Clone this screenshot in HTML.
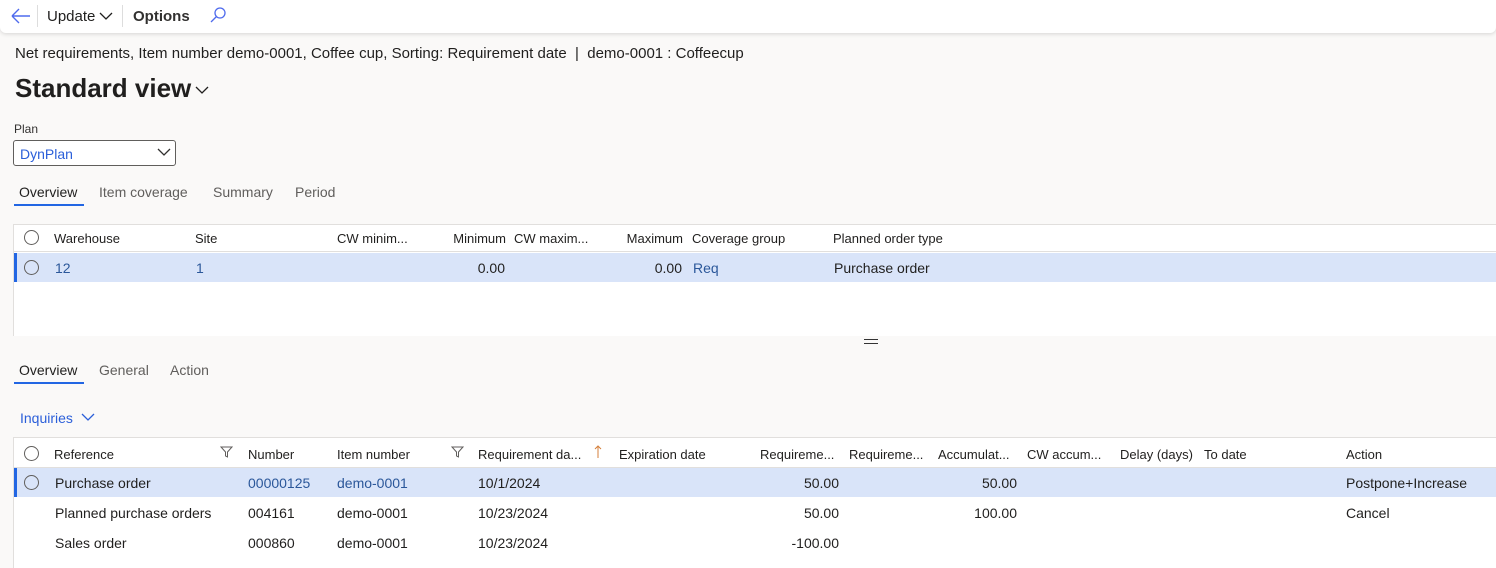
<!DOCTYPE html>
<html><head><meta charset="utf-8"><style>
*{margin:0;padding:0;box-sizing:border-box}
body{width:1496px;height:568px;overflow:hidden;background:#faf9f8;font-family:"Liberation Sans",sans-serif;color:#201f1e;position:relative}
.a{position:absolute;white-space:nowrap}
.g{font-family:"Liberation Sans Narrow","Liberation Sans",sans-serif;font-size:14px}
.h{font-size:13px;font-family:"Liberation Sans Narrow","Liberation Sans",sans-serif;color:#201f1e}
.r{text-align:right}
.lnk{color:#2b579a}
.rad{position:absolute;width:15px;height:15px;border:1px solid #605e5c;border-radius:50%}
</style></head><body>
<div class="a" style="left:0;top:0;width:1496px;height:33px;background:#fff;box-shadow:0 1px 4px rgba(0,0,0,.15);border-radius:0 0 6px 6px"></div>
<svg class="a" style="left:10px;top:7px" width="22" height="18"><path d="M2 9H20M2 9L9 2M2 9L9 16" stroke="#4f6bed" stroke-width="1.4" fill="none"/></svg>
<div class="a" style="left:37px;top:5px;width:1px;height:22px;background:#ddd"></div>
<div class="a" style="left:47px;top:8px;font-size:15px">Update</div>
<svg class="a" style="left:99px;top:11px" width="14" height="10"><path d="M1 2L7 8L13 2" stroke="#201f1e" stroke-width="1.3" fill="none"/></svg>
<div class="a" style="left:122px;top:5px;width:1px;height:22px;background:#ddd"></div>
<div class="a" style="left:133px;top:8px;font-size:15px;font-weight:bold;color:#323130">Options</div>
<svg class="a" style="left:208px;top:6px" width="20" height="18"><circle cx="12" cy="7" r="5" stroke="#4f6bed" stroke-width="1.3" fill="none"/><path d="M8.5 10.5L3 16" stroke="#4f6bed" stroke-width="1.3"/></svg>
<div class="a" style="left:15px;top:45px;font-size:15px">Net requirements, Item number demo-0001, Coffee cup, Sorting: Requirement date &nbsp;| &nbsp;demo-0001 : Coffeecup</div>
<div class="a" style="left:15px;top:73px;font-size:26px;font-weight:bold">Standard view</div>
<svg class="a" style="left:195px;top:86px" width="14" height="9"><path d="M1 1L7 7L13 1" stroke="#201f1e" stroke-width="1.3" fill="none"/></svg>
<div class="a" style="left:14px;top:122px;font-size:12px;color:#323130">Plan</div>
<div class="a" style="left:13px;top:140px;width:163px;height:26px;border:1px solid #605e5c;border-radius:3px;background:#fff"></div>
<div class="a" style="left:20px;top:146px;font-size:14px;color:#2b5fd9">DynPlan</div>
<svg class="a" style="left:157px;top:148px" width="14" height="9"><path d="M1 1L7 7L13 1" stroke="#323130" stroke-width="1.3" fill="none"/></svg>
<div class="a" style="left:19px;top:184px;font-size:14px">Overview</div>
<div class="a" style="left:14px;top:204px;width:70px;height:2px;background:#2266e3"></div>
<div class="a" style="left:99px;top:184px;font-size:14px;color:#605e5c">Item coverage</div>
<div class="a" style="left:213px;top:184px;font-size:14px;color:#605e5c">Summary</div>
<div class="a" style="left:295px;top:184px;font-size:14px;color:#605e5c">Period</div>

<div class="a" style="left:13px;top:224px;width:1483px;height:112px;background:#fff;border-top:1px solid #e1dfdd;border-left:1px solid #e1dfdd"></div>
<div class="a" style="left:14px;top:251px;width:1482px;height:1px;background:#e1dfdd"></div>
<div class="rad" style="left:24px;top:230px"></div>
<div class="a h" style="left:54px;top:231px">Warehouse</div>
<div class="a h" style="left:195px;top:231px">Site</div>
<div class="a h" style="left:337px;top:231px">CW minim...</div>
<div class="a h r" style="left:430px;top:231px;width:76px">Minimum</div>
<div class="a h" style="left:514px;top:231px">CW maxim...</div>
<div class="a h r" style="left:600px;top:231px;width:83px">Maximum</div>
<div class="a h" style="left:692px;top:231px">Coverage group</div>
<div class="a h" style="left:833px;top:231px">Planned order type</div>
<div class="a" style="left:14px;top:253px;width:1482px;height:29px;background:#d9e4f9"></div>
<div class="a" style="left:14px;top:253px;width:3px;height:29px;background:#2266e3"></div>
<div class="rad" style="left:24px;top:260px"></div>
<div class="a g lnk" style="left:55px;top:260px">12</div>
<div class="a g lnk" style="left:196px;top:260px">1</div>
<div class="a g r" style="left:430px;top:260px;width:75px">0.00</div>
<div class="a g r" style="left:600px;top:260px;width:82px">0.00</div>
<div class="a g lnk" style="left:693px;top:260px">Req</div>
<div class="a g" style="left:834px;top:260px">Purchase order</div>
<div class="a" style="left:864px;top:339px;width:14px;height:1px;background:#333"></div>
<div class="a" style="left:864px;top:343px;width:14px;height:1px;background:#333"></div>

<div class="a" style="left:19px;top:362px;font-size:14px">Overview</div>
<div class="a" style="left:14px;top:382px;width:70px;height:2px;background:#2266e3"></div>
<div class="a" style="left:99px;top:362px;font-size:14px;color:#605e5c">General</div>
<div class="a" style="left:170px;top:362px;font-size:14px;color:#605e5c">Action</div>
<div class="a" style="left:20px;top:410px;font-size:14px;color:#2b5fd9">Inquiries</div>
<svg class="a" style="left:81px;top:413px" width="14" height="9"><path d="M1 1L7 7L13 1" stroke="#2b5fd9" stroke-width="1.3" fill="none"/></svg>

<div class="a" style="left:13px;top:437px;width:1483px;height:131px;background:#fff;border-top:1px solid #e1dfdd;border-left:1px solid #e1dfdd"></div>
<div class="a" style="left:14px;top:467px;width:1482px;height:1px;background:#e1dfdd"></div>
<div class="rad" style="left:24px;top:446px"></div>
<div class="a h" style="left:54px;top:447px">Reference</div>
<svg class="a" style="left:220px;top:446px" width="13" height="12"><path d="M1 1H12L7.5 6V11L5.5 10V6Z" stroke="#605e5c" fill="none"/></svg>
<div class="a h" style="left:248px;top:447px">Number</div>
<div class="a h" style="left:337px;top:447px">Item number</div>
<svg class="a" style="left:451px;top:446px" width="13" height="12"><path d="M1 1H12L7.5 6V11L5.5 10V6Z" stroke="#605e5c" fill="none"/></svg>
<div class="a h" style="left:478px;top:447px">Requirement da...</div>
<svg class="a" style="left:594px;top:445px" width="8" height="14"><path d="M4 1V13M1 4L4 1L7 4" stroke="#d47f3b" fill="none"/></svg>
<div class="a h" style="left:619px;top:447px">Expiration date</div>
<div class="a h" style="left:760px;top:447px">Requireme...</div>
<div class="a h" style="left:849px;top:447px">Requireme...</div>
<div class="a h" style="left:938px;top:447px">Accumulat...</div>
<div class="a h" style="left:1027px;top:447px">CW accum...</div>
<div class="a h" style="left:1120px;top:447px">Delay (days)</div>
<div class="a h" style="left:1204px;top:447px">To date</div>
<div class="a h" style="left:1346px;top:447px">Action</div>

<div class="a" style="left:14px;top:468px;width:1482px;height:29px;background:#d9e4f9"></div>
<div class="a" style="left:14px;top:468px;width:3px;height:29px;background:#2266e3"></div>
<div class="rad" style="left:24px;top:475px"></div>
<div class="a g" style="left:55px;top:475px">Purchase order</div>
<div class="a g lnk" style="left:248px;top:475px">00000125</div>
<div class="a g lnk" style="left:337px;top:475px">demo-0001</div>
<div class="a g" style="left:478px;top:475px">10/1/2024</div>
<div class="a g r" style="left:740px;top:475px;width:99px">50.00</div>
<div class="a g r" style="left:920px;top:475px;width:97px">50.00</div>
<div class="a g" style="left:1346px;top:475px">Postpone+Increase</div>

<div class="a g" style="left:55px;top:505px">Planned purchase orders</div>
<div class="a g" style="left:248px;top:505px">004161</div>
<div class="a g" style="left:337px;top:505px">demo-0001</div>
<div class="a g" style="left:478px;top:505px">10/23/2024</div>
<div class="a g r" style="left:740px;top:505px;width:99px">50.00</div>
<div class="a g r" style="left:920px;top:505px;width:97px">100.00</div>
<div class="a g" style="left:1346px;top:505px">Cancel</div>

<div class="a g" style="left:55px;top:535px">Sales order</div>
<div class="a g" style="left:248px;top:535px">000860</div>
<div class="a g" style="left:337px;top:535px">demo-0001</div>
<div class="a g" style="left:478px;top:535px">10/23/2024</div>
<div class="a g r" style="left:740px;top:535px;width:99px">-100.00</div>
</body></html>
